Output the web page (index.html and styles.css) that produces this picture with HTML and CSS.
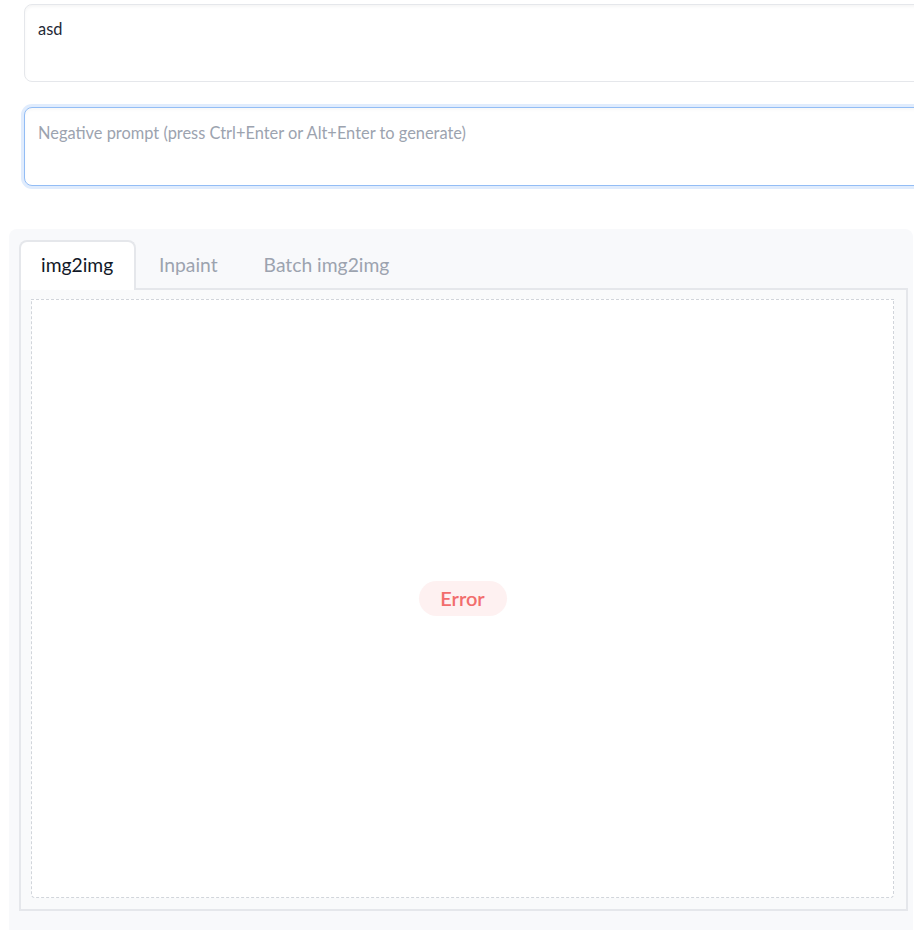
FILE: index.html
```html
<!DOCTYPE html>
<html>
<head>
<meta charset="utf-8">
<link rel="stylesheet" href="styles.css">
</head>
<body>
<div class="page">
  <div class="prompt">
    <div class="field">asd</div>
  </div>
  <div class="prompt negative">
    <div class="field placeholder">Negative prompt (press Ctrl+Enter or Alt+Enter to generate)</div>
  </div>
  <div class="tabs-panel">
    <div class="tab-bar">
      <div class="tab active">img2img</div>
      <div class="tab">Inpaint</div>
      <div class="tab">Batch img2img</div>
    </div>
    <div class="tab-content">
      <div class="drop">
        <span class="error">Error</span>
      </div>
    </div>
  </div>
</div>
</body>
</html>
```

FILE: styles.css
```css
html, body {
  margin: 0;
  padding: 0;
  background: #ffffff;
  overflow: hidden;
  font-family: Lato, "Noto Sans", sans-serif;
}

.page {
  width: 930px;
  padding-top: 4px;
}

.prompt {
  margin-left: 24px;
  width: 900px;
  height: 78px;
  box-sizing: border-box;
  border: 1px solid #e5e7eb;
  border-radius: 8px;
  background: #ffffff;
  box-shadow: inset 0 2px 3px rgba(0, 0, 0, 0.04);
  padding: 12px 13px;
}

.prompt.negative {
  margin-top: 25px;
  height: 79px;
  padding-top: 13px;
  border-color: #93bdf5;
  box-shadow: 0 0 0 3px #e0ecfd, inset 0 2px 3px rgba(0, 0, 0, 0.03);
}

.field {
  font-size: 16.4px;
  line-height: 24px;
  color: #1f2937;
}

.field.placeholder {
  color: #9ca3af;
}

.tabs-panel {
  margin-top: 43px;
  margin-left: 9px;
  width: 904px;
  height: 720px;
  background: #f8f9fb;
  border-radius: 8px 8px 0 0;
  padding: 11px 5px 0 10px;
  box-sizing: border-box;
}

.tab-bar {
  display: flex;
  height: 48px;
}

.tab {
  box-sizing: border-box;
  height: 48px;
  padding: 0 21px 2px;
  display: flex;
  align-items: center;
  font-size: 19.3px;
  color: #9ca3af;
  border: 2px solid transparent;
  border-bottom: none;
}

.tab.active {
  width: 117px;
  padding: 0 20px 4px;
  color: #111827;
  background: #ffffff;
  border-color: #e5e7eb;
  border-radius: 8px 8px 0 0;
  margin-bottom: -2px;
  height: 50px;
  position: relative;
  z-index: 1;
}

.tab-content {
  box-sizing: border-box;
  height: 623px;
  border: 2px solid #e5e7eb;
  background: #f9fafb;
  padding: 9px 12px 11px 10px;
}

.drop {
  box-sizing: border-box;
  height: 100%;
  border: 1px dashed #d1d5db;
  border-radius: 0 0 4px 4px;
  background: #ffffff;
  display: flex;
  align-items: center;
  justify-content: center;
}

.error {
  display: inline-block;
  box-sizing: border-box;
  width: 88px;
  height: 35px;
  line-height: 35px;
  text-align: center;
  border-radius: 18px;
  background: #fef1f1;
  color: #f26d6d;
  font-size: 20px;
  font-weight: 600;
}
```
